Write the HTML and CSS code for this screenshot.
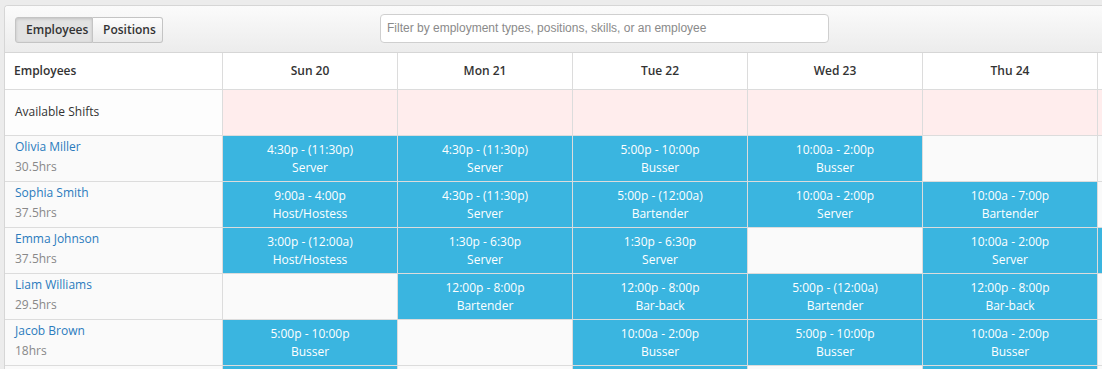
FILE: index.html
```html
<!DOCTYPE html>
<html lang="en">
<head>
    <meta charset="UTF-8">
    <title>Schedule</title>
    <link rel="stylesheet" href="styles.css">
</head>
<body>
    <div class="panel">
        <div class="toolbar">
            <div class="btn-group">
                <button class="btn active">Employees</button>
                <button class="btn">Positions</button>
            </div>
            <input class="filter" type="text" placeholder="Filter by employment types, positions, skills, or an employee">
        </div>

        <div class="schedule">
            <div class="cell head name-col">Employees</div>
            <div class="cell head">Sun 20</div>
            <div class="cell head">Mon 21</div>
            <div class="cell head">Tue 22</div>
            <div class="cell head">Wed 23</div>
            <div class="cell head">Thu 24</div>
            <div class="cell head"></div>

            <div class="cell open-label">Available Shifts</div>
            <div class="cell open"></div>
            <div class="cell open"></div>
            <div class="cell open"></div>
            <div class="cell open"></div>
            <div class="cell open"></div>
            <div class="cell open"></div>

            <!-- Olivia -->
            <div class="cell employee"><a href="#">Olivia Miller</a><span>30.5hrs</span></div>
            <div class="cell shift">4:30p - (11:30p)<br>Server</div>
            <div class="cell shift">4:30p - (11:30p)<br>Server</div>
            <div class="cell shift">5:00p - 10:00p<br>Busser</div>
            <div class="cell shift">10:00a - 2:00p<br>Busser</div>
            <div class="cell empty"></div>
            <div class="cell empty"></div>

            <!-- Sophia -->
            <div class="cell employee"><a href="#">Sophia Smith</a><span>37.5hrs</span></div>
            <div class="cell shift">9:00a - 4:00p<br>Host/Hostess</div>
            <div class="cell shift">4:30p - (11:30p)<br>Server</div>
            <div class="cell shift">5:00p - (12:00a)<br>Bartender</div>
            <div class="cell shift">10:00a - 2:00p<br>Server</div>
            <div class="cell shift">10:00a - 7:00p<br>Bartender</div>
            <div class="cell empty"></div>

            <!-- Emma -->
            <div class="cell employee"><a href="#">Emma Johnson</a><span>37.5hrs</span></div>
            <div class="cell shift">3:00p - (12:00a)<br>Host/Hostess</div>
            <div class="cell shift">1:30p - 6:30p<br>Server</div>
            <div class="cell shift">1:30p - 6:30p<br>Server</div>
            <div class="cell empty"></div>
            <div class="cell shift">10:00a - 2:00p<br>Server</div>
            <div class="cell shift"></div>

            <!-- Liam -->
            <div class="cell employee"><a href="#">Liam Williams</a><span>29.5hrs</span></div>
            <div class="cell empty"></div>
            <div class="cell shift">12:00p - 8:00p<br>Bartender</div>
            <div class="cell shift">12:00p - 8:00p<br>Bar-back</div>
            <div class="cell shift">5:00p - (12:00a)<br>Bartender</div>
            <div class="cell shift">12:00p - 8:00p<br>Bar-back</div>
            <div class="cell empty"></div>

            <!-- Jacob -->
            <div class="cell employee"><a href="#">Jacob Brown</a><span>18hrs</span></div>
            <div class="cell shift">5:00p - 10:00p<br>Busser</div>
            <div class="cell empty"></div>
            <div class="cell shift">10:00a - 2:00p<br>Busser</div>
            <div class="cell shift">5:00p - 10:00p<br>Busser</div>
            <div class="cell shift">10:00a - 2:00p<br>Busser</div>
            <div class="cell empty"></div>

            <!-- next row, cut off by the frame -->
            <div class="cell employee"></div>
            <div class="cell shift"></div>
            <div class="cell empty"></div>
            <div class="cell shift"></div>
            <div class="cell empty"></div>
            <div class="cell shift"></div>
            <div class="cell empty"></div>
        </div>
    </div>
</body>
</html>
```

FILE: styles.css
```css
html, body {
    margin: 0;
    height: 100%;
    overflow: hidden;
}
body {
    font-family: 'Open Sans', 'Liberation Sans', sans-serif;
    font-size: 12px;
    color: #333;
    background-color: #ececec;
    padding: 5px 0 0 4px;
    box-sizing: border-box;
}
.panel {
    background: white;
    border: 1px solid #d6d6d6;
    border-right: none;
    border-radius: 4px 0 0 0;
    overflow: hidden;
    width: 1300px;
}
.toolbar {
    display: flex;
    align-items: center;
    height: 46px;
    padding-left: 10px;
    background: linear-gradient(#fbfbfb, #ececec);
    border-bottom: 1px solid #d6d6d6;
}
.btn-group {
    display: flex;
    margin-top: 1px;
}
.btn {
    font-family: 'Open Sans', sans-serif;
    font-size: 12px;
    font-weight: 600;
    color: #333;
    height: 26px;
    padding: 0 10px;
    border: 1px solid #c4c4c4;
    background: linear-gradient(#fdfdfd, #eaeaea);
    cursor: pointer;
}
.btn:first-child {
    border-radius: 3px 0 0 3px;
    width: 78px;
}
.btn:last-child {
    border-radius: 0 3px 3px 0;
    border-left: none;
    width: 70px;
}
.btn.active {
    background: #e2e2e2;
    box-shadow: inset 0 1px 3px rgba(0,0,0,0.15);
}
.filter {
    margin-left: 217px;
    width: 449px;
    height: 29px;
    box-sizing: border-box;
    border: 1px solid #cfcfcf;
    border-radius: 4px;
    padding: 0 6px;
    font-family: 'Liberation Sans', Arial, sans-serif;
    font-size: 12px;
    background: white;
    margin-bottom: 2px;
}
.filter::placeholder {
    color: #8a8a8a;
}
.schedule {
    display: grid;
    grid-template-columns: 218px repeat(6, 175px);
    grid-auto-rows: 46px;
    grid-template-rows: 37px;
}
.cell {
    box-sizing: border-box;
    border-right: 1px solid #dcdcdc;
    border-bottom: 1px solid #dcdcdc;
    display: flex;
    align-items: center;
    justify-content: center;
    text-align: center;
    line-height: 18px;
}
.head {
    font-weight: 600;
    background: white;
}
.head.name-col {
    justify-content: flex-start;
    padding-left: 9px;
}
.open-label {
    justify-content: flex-start;
    padding-left: 10px;
    padding-bottom: 1px;
    background: #fdfdfd;
}
.open {
    background: #ffeded;
}
.employee {
    flex-direction: column;
    align-items: flex-start;
    justify-content: flex-start;
    padding: 1px 0 0 10px;
    background: #fafafa;
    text-align: left;
}
.employee a {
    color: #2a7bbd;
    text-decoration: none;
}
.employee span {
    color: #888;
}
.employee a,
.employee span {
    line-height: 20px;
}
.shift {
    background: #3ab5e0;
    color: white;
}
.empty {
    background: #fafafa;
}
```
